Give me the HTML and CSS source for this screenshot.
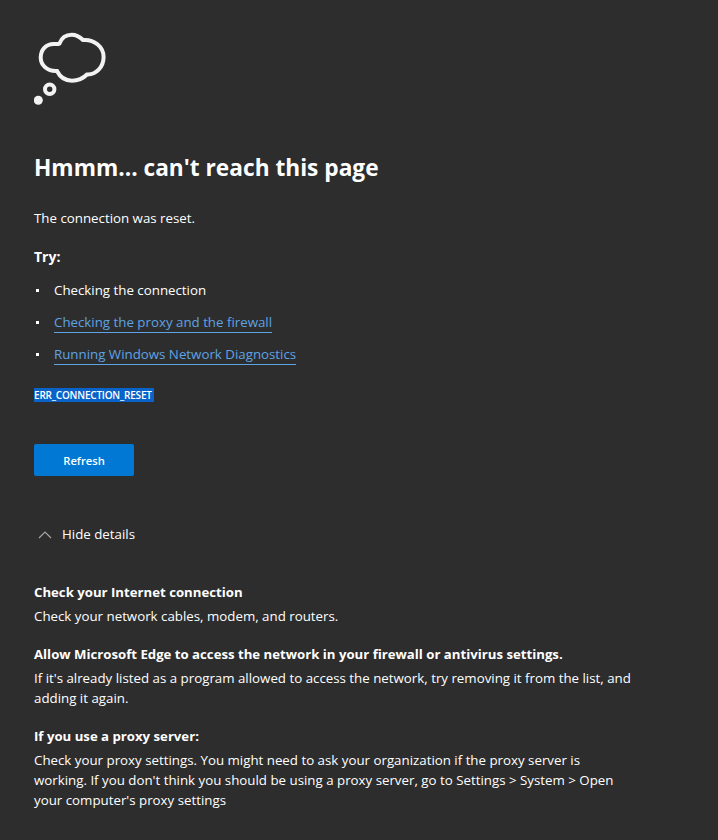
FILE: index.html
```html
<!DOCTYPE html>
<html lang="en">
<head>
    <meta charset="UTF-8">
    <meta name="viewport" content="width=device-width, initial-scale=1.0">
    <title>Can't reach this page</title>
    <link rel="stylesheet" href="styles.css">
</head>
<body>
    <div class="container">
        <svg class="cloud" width="74" height="78" viewBox="0 0 74 78" fill="none" stroke="#f2f2f2" stroke-width="4">
            <path d="M19.5 14C22 14 24 14.5 25.5 13.5C27.5 8 32 4.7 37.7 4.7C43 4.7 46 7 49 10C60 9 69.6 16.5 69.6 27C69.6 37 62 45 53 44.5C49 48.5 44 50.7 38 50.7C31 50.7 26 47 23 41C13 41.5 6.7 35 6.7 27.5C6.7 20 12 14 19.5 14Z"/>
            <circle cx="15.7" cy="59.3" r="4.7"/>
            <circle cx="4.3" cy="70.3" r="4.5" fill="#f2f2f2" stroke="none"/>
        </svg>
        <h1>Hmmm... can't reach this page</h1>
        <p class="reason">The connection was reset.</p>
        <p class="try">Try:</p>
        <ul class="tries">
            <li>Checking the connection</li>
            <li><a href="#">Checking the proxy and the firewall</a></li>
            <li><a href="#">Running Windows Network Diagnostics</a></li>
        </ul>
        <div class="code"><span>ERR_CONNECTION_RESET</span></div>
        <button type="button" class="refresh">Refresh</button>
        <div class="toggle">
            <svg width="14" height="9" viewBox="0 0 14 9" fill="none" stroke="#a6a6a6" stroke-width="1.2">
                <path d="M1 8L7 2L13 8"/>
            </svg>
            <span>Hide details</span>
        </div>
        <div class="details">
            <h2>Check your Internet connection</h2>
            <p>Check your network cables, modem, and routers.</p>
            <h2>Allow Microsoft Edge to access the network in your firewall or antivirus settings.</h2>
            <p>If it's already listed as a program allowed to access the network, try removing it from the list, and adding it again.</p>
            <h2>If you use a proxy server:</h2>
            <p>Check your proxy settings. You might need to ask your organization if the proxy server is working. If you don't think you should be using a proxy server, go to Settings &gt; System &gt; Open your computer's proxy settings</p>
        </div>
    </div>
</body>
</html>
```

FILE: styles.css
```css
body {
    margin: 0;
    background-color: #2d2d2d;
    color: #fff;
    font-family: "Open Sans", "Noto Sans", sans-serif;
    font-size: 13.3px;
    line-height: 20px;
}
.container {
    padding: 30px 83px 0 34px;
}
.cloud {
    display: block;
}
h1 {
    margin: 44px 0 0;
    font-size: 22.7px;
    line-height: 32px;
    font-weight: 700;
}
.reason {
    margin: 24px 0 0;
}
.try {
    margin: 19px 0 0;
    font-size: 14px;
    font-weight: 700;
}
.tries {
    list-style: none;
    margin: 13px 0 0;
    padding: 0;
}
.tries li {
    position: relative;
    padding-left: 20px;
    margin-bottom: 12px;
}
.tries li::before {
    content: "";
    position: absolute;
    left: 2px;
    top: 9px;
    width: 3px;
    height: 3px;
    background-color: #fff;
}
.tries a {
    color: #5ea3e4;
    text-decoration: none;
    border-bottom: 1px solid #5ea3e4;
    padding-bottom: 1px;
}
.code {
    margin-top: 24px;
    font-size: 10px;
    letter-spacing: -0.2px;
    font-weight: 600;
    line-height: 14px;
}
.code span {
    background-color: #0a63c9;
    display: inline-block;
    width: 120px;
}
.refresh {
    display: block;
    width: 100px;
    height: 32px;
    margin-top: 42px;
    background-color: #0078d4;
    color: #fff;
    border: none;
    border-radius: 2px;
    font-family: inherit;
    font-size: 11.2px;
    font-weight: 600;
    cursor: pointer;
}
.toggle {
    display: flex;
    align-items: center;
    margin-top: 48px;
    padding-left: 4px;
    gap: 10px;
}
.details {
    margin-top: 38px;
}
.details h2 {
    margin: 0 0 4px;
    font-size: 13.2px;
    line-height: 20px;
    font-weight: 700;
}
.details p {
    margin: 0 0 18px;
}
```
